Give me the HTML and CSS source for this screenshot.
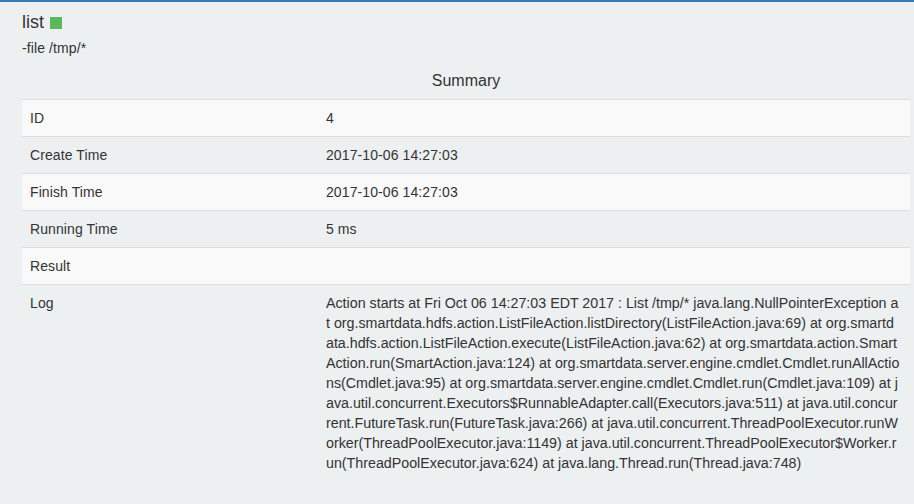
FILE: index.html
```html
<!DOCTYPE html>
<html>
<head>
<meta charset="utf-8">
<link rel="stylesheet" href="styles.css">
</head>
<body>
<div class="page">
  <h4 class="title">list <span class="status"></span></h4>
  <div class="args">-file /tmp/*</div>
  <table class="summary">
    <caption>Summary</caption>
    <colgroup><col class="c1"><col class="c2"></colgroup>
    <tbody>
      <tr><td>ID</td><td>4</td></tr>
      <tr><td>Create Time</td><td>2017-10-06 14:27:03</td></tr>
      <tr><td>Finish Time</td><td>2017-10-06 14:27:03</td></tr>
      <tr><td>Running Time</td><td>5 ms</td></tr>
      <tr><td>Result</td><td></td></tr>
      <tr><td>Log</td><td class="log">Action starts at Fri Oct 06 14:27:03 EDT 2017 : List /tmp/* java.lang.NullPointerException at org.smartdata.hdfs.action.ListFileAction.listDirectory(ListFileAction.java:69) at org.smartdata.hdfs.action.ListFileAction.execute(ListFileAction.java:62) at org.smartdata.action.SmartAction.run(SmartAction.java:124) at org.smartdata.server.engine.cmdlet.Cmdlet.runAllActions(Cmdlet.java:95) at org.smartdata.server.engine.cmdlet.Cmdlet.run(Cmdlet.java:109) at java.util.concurrent.Executors$RunnableAdapter.call(Executors.java:511) at java.util.concurrent.FutureTask.run(FutureTask.java:266) at java.util.concurrent.ThreadPoolExecutor.runWorker(ThreadPoolExecutor.java:1149) at java.util.concurrent.ThreadPoolExecutor$Worker.run(ThreadPoolExecutor.java:624) at java.lang.Thread.run(Thread.java:748)</td></tr>
    </tbody>
  </table>
</div>
</body>
</html>
```

FILE: styles.css
```css
html, body {
  margin: 0;
  padding: 0;
  height: 100%;
}
body {
  background: #ecf0f1;
  border-top: 2px solid #337ab7;
  box-sizing: border-box;
  font-family: "Liberation Sans", Arial, sans-serif;
  font-size: 14px;
  line-height: 20px;
  color: #333;
}
.page {
  padding: 10px 4px 0 22px;
}
.title {
  margin: 0;
  font-size: 18px;
  font-weight: normal;
  line-height: 20px;
  display: flex;
  align-items: center;
  gap: 6px;
}
.status {
  display: inline-block;
  width: 12px;
  height: 12px;
  background: #5cb85c;
  margin-top: 1px;
}
.args {
  margin-top: 6px;
  letter-spacing: 0.1px;
}
.summary {
  width: 100%;
  border-collapse: collapse;
  border-spacing: 0;
  margin-top: 5px;
  table-layout: fixed;
}
.summary caption {
  font-size: 16px;
  line-height: 20px;
  padding: 8px 0;
  text-align: center;
}
.c1 { width: 33.333%; }
.summary td {
  padding: 8px;
  border-top: 1px solid #ddd;
  vertical-align: top;
  text-align: left;
  letter-spacing: 0.1px;
}
.summary tr:nth-child(odd) td {
  background: #f9f9f9;
}
.summary td.log {
  word-break: break-all;
  letter-spacing: 0;
  font-size: 14.25px;
  padding-right: 9px;
}
```
